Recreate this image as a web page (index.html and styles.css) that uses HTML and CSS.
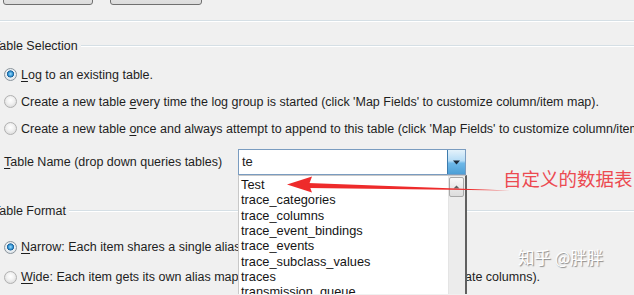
FILE: index.html
```html
<!DOCTYPE html>
<html>
    <head>
        <meta charset="utf-8">
        <link rel="stylesheet" href="styles.css">
    </head>
    <body>
        <div class="top">
            <button class="btn btn-one"></button>
            <button class="btn btn-two"></button>
        </div>
        <div class="rule-full"></div>

        <div class="section-head head-selection">
            <span class="head-text">Table Selection</span>
            <div class="rule"></div>
        </div>
        <div class="radio-row">
            <span class="radio checked"></span>
            <span class="label"><u>L</u>og to an existing table.</span>
        </div>
        <div class="radio-row">
            <span class="radio"></span>
            <span class="label">Create a new table <u>e</u>very time the log group is started (click 'Map Fields' to customize column/item map).</span>
        </div>
        <div class="radio-row">
            <span class="radio"></span>
            <span class="label">Create a new table <u>o</u>nce and always attempt to append to this table (click 'Map Fields' to customize column/item map).</span>
        </div>

        <div class="name-row">
            <span class="name-label"><u>T</u>able Name (drop down queries tables)</span>
            <div class="combo">
                <span class="combo-value">te</span>
                <span class="combo-btn">
                    <svg width="9" height="5" viewBox="0 0 9 5"><path d="M1 0.5 L8 0.5 L4.5 4.5 Z" fill="#1b2a3a"/></svg>
                </span>
                <div class="dropdown">
                    <ul class="items">
                        <li>Test</li>
                        <li>trace_categories</li>
                        <li>trace_columns</li>
                        <li>trace_event_bindings</li>
                        <li>trace_events</li>
                        <li>trace_subclass_values</li>
                        <li>traces</li>
                        <li>transmission_queue</li>
                    </ul>
                    <div class="scrollbar">
                        <span class="scroll-up">
                            <svg width="7" height="4" viewBox="0 0 7 4"><path d="M0.5 3.5 L3.5 0.5 L6.5 3.5 Z" fill="#606060"/></svg>
                        </span>
                    </div>
                </div>
            </div>
        </div>

        <div class="section-head head-format">
            <span class="head-text">Table Format</span>
            <div class="rule"></div>
        </div>
        <div class="radio-row wide-row">
            <span class="radio checked"></span>
            <span class="label"><u>N</u>arrow: Each item shares a single alias map</span>
        </div>
        <div class="radio-row wide-row">
            <span class="radio"></span>
            <span class="label"><u>W</u>ide: Each item gets its own alias map (values of each item are logged to separate columns).</span>
        </div>

        <!-- annotation drawn over the screenshot -->
        <div class="note">自定义的数据表</div>
        <svg class="arrow" width="634" height="295" viewBox="0 0 634 295">
            <path d="M510 190.5 L308 183 L308 188 Z" fill="#ee2b2b"/>
            <path d="M287 184.5 L312 176.5 L309 184.5 L312 192.5 Z" fill="#ee2b2b"/>
        </svg>
        <div class="watermark">知乎 @胖胖</div>
    </body>
</html>
```

FILE: styles.css
```css
html, body {
    margin: 0;
    height: 100%;
    overflow: hidden;
}

body {
    position: relative;
    background: #f0f0f0;
    font-family: 'Liberation Sans', Arial, sans-serif;
    font-size: 12.5px;
    color: #1e1e1e;
}

u {
    text-decoration: underline;
    text-underline-offset: 2px;
}

.top {
    height: 20px;
    display: flex;
    align-items: flex-start;
    overflow: hidden;
}

.btn {
    height: 24px;
    margin-top: -19px;
    border: 1px solid #707070;
    border-radius: 3px;
    background: linear-gradient(#f2f2f2, #dcdcdc);
    padding: 0;
}

.btn-one {
    width: 90px;
    margin-left: 3px;
}

.btn-two {
    width: 92px;
    margin-left: 17px;
}

.rule-full {
    border-top: 1px solid #d5dfe5;
    border-bottom: 1px solid #ffffff;
}

.section-head {
    display: flex;
    align-items: center;
    height: 20px;
    margin-left: -7px;
}

.head-selection {
    margin-top: 14px;
}

.head-format {
    margin-top: 26px;
}

.head-text {
    white-space: nowrap;
    padding-right: 3px;
}

.rule {
    flex: 1;
    border-top: 1px solid #d5dfe5;
    border-bottom: 1px solid #ffffff;
}

.radio-row {
    display: flex;
    align-items: center;
    height: 27px;
    padding-left: 4px;
    white-space: nowrap;
}

.head-selection + .radio-row {
    margin-top: 5px;
}

.head-format + .radio-row {
    margin-top: 11px;
}

.wide-row {
    height: 30px;
}

.radio {
    flex: none;
    width: 11px;
    height: 11px;
    border-radius: 50%;
    border: 1px solid #b0b0b0;
    background: radial-gradient(circle at 50% 40%, #ffffff 0, #f2f2f2 40%, #d2d2d2 100%);
    margin-right: 4px;
}

.radio.checked {
    border-color: #8a949c;
    background: radial-gradient(circle at 50% 45%, #9fdcff 0, #3a9ad6 25%, #19609a 40%, #eef2f5 47%, #d0d8de 100%);
}

.label {
    white-space: nowrap;
}

.name-row {
    display: flex;
    align-items: center;
    margin-top: 7px;
    padding-left: 4px;
    height: 26px;
}

.name-label {
    width: 234px;
    white-space: nowrap;
}

.combo {
    position: relative;
    display: flex;
    width: 226px;
    height: 24px;
    border: 1px solid #7a9cc0;
    background: #ffffff;
}

.combo-value {
    flex: 1;
    padding-left: 3px;
    line-height: 24px;
    font-size: 13px;
}

.combo-btn {
    width: 17px;
    display: flex;
    align-items: center;
    justify-content: center;
    border-left: 1px solid #3d7bad;
    background: linear-gradient(#e4f2fb, #b5dcf6 45%, #6eb8e8 55%, #4d9fd6);
}

.dropdown {
    position: absolute;
    top: 25px;
    left: -1px;
    width: 226px;
    height: 118px;
    overflow: hidden;
    display: flex;
    background: #ffffff;
    border: 1px solid #c8c8c8;
    border-bottom: 0;
    border-right: 2px solid #606060;
}

.items {
    flex: 1;
    list-style: none;
    margin: 0;
    padding: 1px 0 0 2px;
    font-size: 12.8px;
    line-height: 15.35px;
    color: #141414;
}

.scrollbar {
    width: 16px;
    background: #ececec;
    border-left: 1px solid #e4e4e4;
}

.scroll-up {
    display: flex;
    align-items: center;
    justify-content: center;
    height: 18px;
    margin: 1px 1px 0 0;
    border: 1px solid #a8a8a8;
    border-radius: 2px;
    background: linear-gradient(#f8f8f8, #dcdcdc);
}

.note {
    position: absolute;
    left: 503px;
    top: 164px;
    font-family: 'Noto Sans CJK SC', sans-serif;
    font-size: 18.5px;
    line-height: 28px;
    color: #ec4a50;
    white-space: nowrap;
}

.arrow {
    position: absolute;
    left: 0;
    top: 0;
}

.watermark {
    position: absolute;
    left: 518px;
    top: 245px;
    font-family: 'Noto Sans CJK SC', sans-serif;
    font-size: 16.5px;
    line-height: 24px;
    color: #ffffff;
    text-shadow: 1px 1px 1px #8a8a8a;
    white-space: nowrap;
}
```
